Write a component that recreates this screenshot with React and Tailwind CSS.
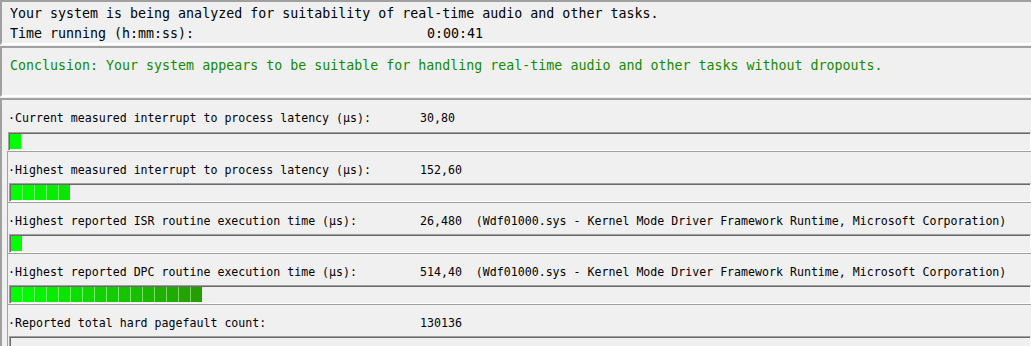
import React from "react";

const rows = [
  { label: "·Current measured interrupt to process latency (µs):", value: "30,80", segs: 1 },
  { label: "·Highest measured interrupt to process latency (µs):", value: "152,60", segs: 5 },
  { label: "·Highest reported ISR routine execution time (µs):", value: "26,480  (Wdf01000.sys - Kernel Mode Driver Framework Runtime, Microsoft Corporation)", segs: 1 },
  { label: "·Highest reported DPC routine execution time (µs):", value: "514,40  (Wdf01000.sys - Kernel Mode Driver Framework Runtime, Microsoft Corporation)", segs: 16 },
  { label: "·Reported total hard pagefault count:", value: "130136", segs: 0 },
];

function segColor(i) {
  const r = Math.round(Math.min(i * 2.4, 40));
  const g = Math.round(255 - i * 6.4);
  return `rgb(${r},${g},0)`;
}

function Bar({ segs }) {
  return (
    <div className="h-[19px] ml-[1px] border-t border-l border-t-[#a0a0a0] border-l-[#a0a0a0] border-b border-r border-b-white border-r-white shadow-[inset_1px_1px_0_#696969] pl-[1px] pt-[1px] flex">
      {Array.from({ length: segs }).map((_, i) => (
        <div
          key={i}
          className="w-[12px] h-[15px] border-r border-r-[rgba(255,255,255,0.45)] last:border-r-0 last:w-[11px]"
          style={{ backgroundColor: segColor(i) }}
        />
      ))}
    </div>
  );
}

export default function App() {
  return (
    <div className="w-[1031px] h-[346px] bg-[#f0f0f0] overflow-hidden flex flex-col font-['DejaVu_Sans_Mono',monospace] text-black">
      <div className="h-[45px] shrink-0 border-t-2 border-l-2 border-t-[#a0a0a0] border-l-[#a0a0a0] border-b-2 border-b-white pl-[8px] pt-[2px] text-[13.3px] leading-[20px]">
        <div>Your system is being analyzed for suitability of real-time audio and other tasks.</div>
        <div className="flex">
          <span className="w-[417px]">Time running (h:mm:ss):</span>
          <span>0:00:41</span>
        </div>
      </div>
      <div className="h-[51px] shrink-0 mt-[1px] border-t-2 border-l-2 border-t-[#a0a0a0] border-l-[#a0a0a0] border-b-2 border-b-white pl-[8px] pt-[8px] text-[13.3px] leading-[20px] text-[#138a00]">
        Conclusion: Your system appears to be suitable for handling real-time audio and other tasks without dropouts.
      </div>
      <div className="flex-1 mt-[1px] border-t-2 border-l-2 border-t-[#a0a0a0] border-l-[#a0a0a0] pl-[5px] text-[11.6px] leading-[16px]">
        {rows.map((r, idx) => (
          <div
            key={idx}
            className={
              "h-[51px] shrink-0 flex flex-col " +
              (idx === 0 ? "" : "border-t border-l border-t-[#a0a0a0] border-l-[#a0a0a0]")
            }
          >
            <div className={"flex items-center h-[32px] pt-[4px] " + (idx === 0 ? "pl-[1px]" : "")}>
              <span className="w-[412px] whitespace-pre">{r.label}</span>
              <span className="whitespace-pre">{r.value}</span>
            </div>
            <Bar segs={r.segs} />
          </div>
        ))}
      </div>
    </div>
  );
}
